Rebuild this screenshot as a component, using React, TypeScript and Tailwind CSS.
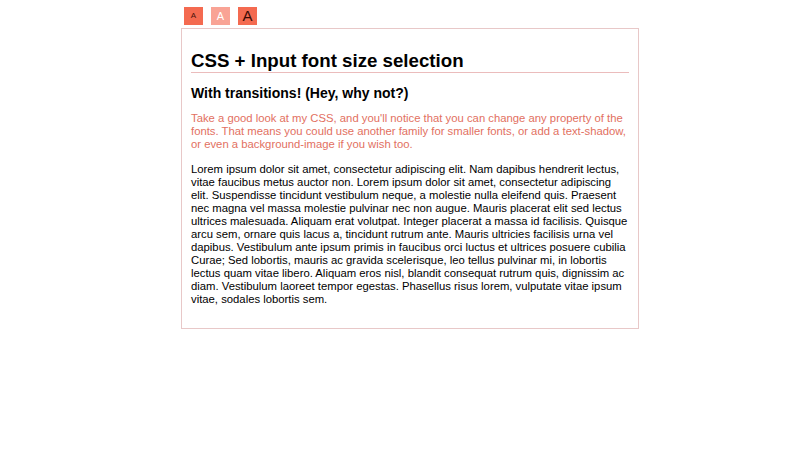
export default function App() {
  return (
    <div className="w-[800px] h-[450px] bg-white" style={{ fontFamily: '"Liberation Sans", Arial, sans-serif' }}>
      <div className="flex gap-[8px] pl-[184px] pt-[7px]">
        <button className="w-[19px] h-[18px] bg-[#f46a50] text-[#4a120a] text-[8px] leading-[18px] flex items-center justify-center">A</button>
        <button className="w-[19px] h-[18px] bg-[#f9a395] text-white text-[11px] leading-[18px] flex items-center justify-center">A</button>
        <button className="w-[19px] h-[18px] bg-[#f46a50] text-[#3a0a05] text-[15px] leading-[18px] flex items-center justify-center">A</button>
      </div>
      <div className="ml-[181px] mt-[3px] w-[458px] h-[301px] border border-[#e8c8c8] px-[9px] pt-[21px]">
        <h1 className="text-[18.7px] font-bold leading-[22px] text-black border-b border-[#ebbcbc]">CSS + Input font size selection</h1>
        <h2 className="text-[14px] font-bold leading-[16px] text-black mt-[12px]">With transitions! (Hey, why not?)</h2>
        <p className="text-[11.3px] leading-[13px] text-[#e2705f] mt-[11px]">
          Take a good look at my CSS, and you'll notice that you can change any property of the fonts. That means you could use another family for smaller fonts, or add a text-shadow, or even a background-image if you wish too.
        </p>
        <p className="text-[11.3px] leading-[13px] text-black mt-[12px]">
          Lorem ipsum dolor sit amet, consectetur adipiscing elit. Nam dapibus hendrerit lectus, vitae faucibus metus auctor non. Lorem ipsum dolor sit amet, consectetur adipiscing elit. Suspendisse tincidunt vestibulum neque, a molestie nulla eleifend quis. Praesent nec magna vel massa molestie pulvinar nec non augue. Mauris placerat elit sed lectus ultrices malesuada. Aliquam erat volutpat. Integer placerat a massa id facilisis. Quisque arcu sem, ornare quis lacus a, tincidunt rutrum ante. Mauris ultricies facilisis urna vel dapibus. Vestibulum ante ipsum primis in faucibus orci luctus et ultrices posuere cubilia Curae; Sed lobortis, mauris ac gravida scelerisque, leo tellus pulvinar mi, in lobortis lectus quam vitae libero. Aliquam eros nisl, blandit consequat rutrum quis, dignissim ac diam. Vestibulum laoreet tempor egestas. Phasellus risus lorem, vulputate vitae ipsum vitae, sodales lobortis sem.
        </p>
      </div>
    </div>
  );
}
